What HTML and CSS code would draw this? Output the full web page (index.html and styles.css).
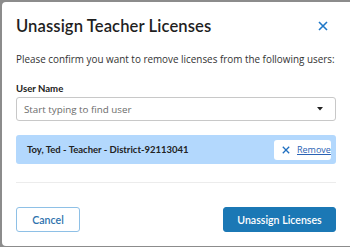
FILE: index.html
```html
<!DOCTYPE html>
<html>
<head>
<meta charset="utf-8">
<link rel="stylesheet" href="styles.css">
</head>
<body>
<div class="dialog">
  <div class="header">
    <h1 class="title">Unassign Teacher Licenses</h1>
    <button class="close" aria-label="Close">
      <svg width="10" height="10" viewBox="0 0 10 10"><path d="M1 1L9 9M9 1L1 9" stroke="#1f78c8" stroke-width="1.6" fill="none"/></svg>
    </button>
  </div>
  <p class="intro">Please confirm you want to remove licenses from the following users:</p>
  <label class="label">User Name</label>
  <div class="select">
    <span class="placeholder">Start typing to find user</span>
    <svg class="caret" width="6" height="4" viewBox="0 0 6 4"><path d="M0 0H6L3 3.5Z" fill="#222"/></svg>
  </div>
  <div class="user-row">
    <span class="user-name">Toy, Ted - Teacher - District-92113041</span>
    <button class="remove">
      <svg width="8" height="8" viewBox="0 0 8 8"><path d="M0.8 0.8L7.2 7.2M7.2 0.8L0.8 7.2" stroke="#1f6fc0" stroke-width="1.3" fill="none"/></svg>
      <span class="remove-text">Remove</span>
    </button>
  </div>
  <div class="divider"></div>
  <div class="footer">
    <button class="btn btn-cancel">Cancel</button>
    <button class="btn btn-primary">Unassign Licenses</button>
  </div>
</div>
</body>
</html>
```
FILE: styles.css
```css
html, body {
  margin: 0;
  padding: 0;
  background: #8c8c8c;
  width: 350px;
  height: 247px;
  overflow: hidden;
}
.dialog {
  box-sizing: border-box;
  margin: 2px 0 0 2px;
  width: 360px;
  height: 244px;
  background: #fff;
  border-radius: 4px 0 0 4px;
  padding: 0 14px;
  font-family: "Lato", sans-serif;
  color: #1f1f1f;
}
.header {
  display: flex;
  justify-content: space-between;
  align-items: center;
  width: 320px;
  padding-top: 12px;
  height: 24px;
}
.title {
  margin: 0;
  font-size: 16.6px;
  font-weight: 600;
  letter-spacing: 0.1px;
  line-height: 24px;
}
.close {
  border: 0;
  background: none;
  padding: 0;
  margin-right: 8px;
  display: flex;
}
.intro {
  margin: 14px 0 0 0;
  font-family: "Open Sans", sans-serif;
  font-size: 9.9px;
  line-height: 14px;
  color: #333;
  white-space: nowrap;
}
.label {
  display: block;
  margin-top: 17px;
  font-size: 9.6px;
  line-height: 12px;
  font-weight: 700;
  color: #222;
}
.select {
  box-sizing: border-box;
  margin-top: 2px;
  width: 320px;
  height: 24px;
  border: 1px solid #c8c8c8;
  border-radius: 3px;
  display: flex;
  align-items: center;
  justify-content: space-between;
  padding: 0 12px 0 7px;
}
.placeholder {
  font-family: "Open Sans", sans-serif;
  font-size: 9.8px;
  color: #6b6b6b;
}
.user-row {
  box-sizing: border-box;
  margin-top: 14px;
  width: 320px;
  height: 29px;
  background: #b3d8fd;
  border-radius: 3px;
  display: flex;
  align-items: center;
  justify-content: space-between;
  padding: 0 5px 0 11px;
}
.user-name {
  font-size: 9.5px;
  font-weight: 700;
  color: #222;
}
.remove {
  box-sizing: border-box;
  height: 20px;
  width: 57px;
  background: #fff;
  border: 0;
  border-radius: 3px;
  display: flex;
  align-items: center;
  gap: 7px;
  padding: 0 0 0 8px;
}
.remove-text {
  font-family: "Open Sans", sans-serif;
  font-size: 9px;
  color: #2a62b4;
  text-decoration: underline;
}
.divider {
  margin-top: 18px;
  width: 320px;
  height: 1px;
  background: #ececec;
}
.footer {
  width: 320px;
  display: flex;
  justify-content: space-between;
  margin-top: 24px;
}
.btn {
  box-sizing: border-box;
  height: 25px;
  border-radius: 3px;
  font-family: "Lato", sans-serif;
  font-size: 10.6px;
  font-weight: 600;
  padding: 0;
}
.btn-cancel {
  width: 64px;
  background: #fff;
  border: 1px solid #8ec0e6;
  color: #2d72ad;
}
.btn-primary {
  width: 113px;
  background: #1b78b5;
  border: 1px solid #1b78b5;
  color: #fff;
}
```
